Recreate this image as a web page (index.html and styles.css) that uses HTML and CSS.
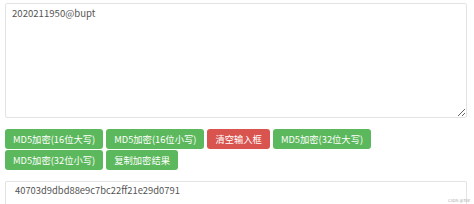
FILE: index.html
```html
<!DOCTYPE html>
<html>
<head>
  <title>MD5加密</title>
  <link rel="stylesheet" href="styles.css">
</head>
<body>
  <div class="md5-box">
    <!-- input -->
    <textarea class="input-area" id="input">2020211950@bupt</textarea>

    <!-- buttons -->
    <div class="btn-row">
      <button class="btn btn-green">MD5加密(16位大写)</button>
      <button class="btn btn-green">MD5加密(16位小写)</button>
      <button class="btn btn-red">清空输入框</button>
      <button class="btn btn-green">MD5加密(32位大写)</button>
      <button class="btn btn-green">MD5加密(32位小写)</button>
      <button class="btn btn-green">复制加密结果</button>
    </div>

    <!-- result -->
    <div class="output-area">
      40703d9dbd88e9c7bc22ff21e29d0791
      <span class="mark">CSDN @Tue</span>
    </div>
  </div>
</body>
</html>
```

FILE: styles.css
```css
body {
  margin: 0;
  font-family: "Noto Sans CJK SC", sans-serif;
  font-size: 10px;
  color: #555;
  background: #fff;
}

.md5-box {
  padding: 3px 7px 0 5px;
}

.input-area {
  display: block;
  box-sizing: border-box;
  width: 100%;
  height: 115px;
  margin: 0;
  padding: 2px 6px;
  border: 1px solid #e3e3e3;
  border-radius: 2px;
  font-family: "Noto Sans CJK SC", sans-serif;
  font-size: 9.6px;
  line-height: 14px;
  color: #555;
  resize: vertical;
  outline: none;
}

/* buttons */
.btn-row {
  display: flex;
  flex-wrap: wrap;
  gap: 1px 3px;
  margin: 11px 0;
}

.btn {
  height: 20px;
  padding: 0 8px;
  border: none;
  border-radius: 3px;
  font-family: "Noto Sans CJK SC", sans-serif;
  font-size: 9.3px;
  line-height: 20px;
  color: #fff;
  cursor: pointer;
}

.btn-green {
  background-color: #5cb85c;
}

.btn-red {
  background-color: #d9534f;
}

.output-area {
  position: relative;
  box-sizing: border-box;
  height: 23px;
  padding: 1px 9px;
  border: 1px solid #e3e3e3;
  border-bottom: none;
  border-radius: 2px 2px 0 0;
  font-size: 9.4px;
  line-height: 14px;
}

.mark {
  position: absolute;
  right: -4px;
  top: 11px;
  font-size: 4px;
  color: #aaa;
}
```
